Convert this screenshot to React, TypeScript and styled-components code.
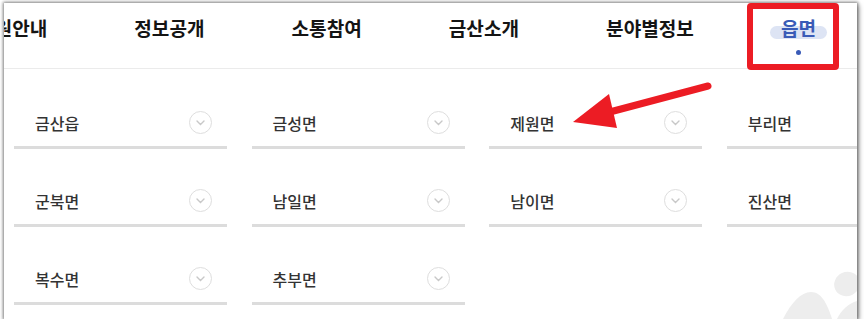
import React from 'react';
import styled, { createGlobalStyle } from 'styled-components';

const GlobalStyle = createGlobalStyle`
    html, body {
        margin: 0;
        padding: 0;
        background-color: #ffffff;
        overflow: hidden;
    }
    body {
        font-family: "Noto Sans CJK KR", "Noto Sans", sans-serif;
    }
`;

const Frame = styled.div`
    position: relative;
    width: 853px;
    height: 316px;
    margin: 3px 0 0 4px;
    background-color: #ffffff;
    box-shadow: 0 0 3px 1px rgba(0, 0, 0, 0.45), 2px 2px 5px rgba(0, 0, 0, 0.35);
`;

const Viewport = styled.div`
    position: relative;
    width: 100%;
    height: 100%;
    overflow: hidden;
`;

const Nav = styled.nav`
    display: flex;
    gap: 87px;
    height: 66px;
    margin-left: -27px;
    padding-top: 13px;
    box-sizing: border-box;
    border-bottom: 1px solid #ebebeb;
    white-space: nowrap;
`;

const NavItem = styled.a<{ $active?: boolean }>`
    position: relative;
    z-index: 0;
    font-size: 19.1px;
    font-weight: 700;
    line-height: 24px;
    color: ${(p) => (p.$active ? '#3a5bb7' : '#141414')};
    text-decoration: none;

    ${(p) =>
        p.$active &&
        `
        &::before {
            content: '';
            position: absolute;
            z-index: -1;
            left: -11px;
            right: -11px;
            top: 10px;
            height: 13px;
            border-radius: 7px;
            background-color: #dde4f4;
        }
        &::after {
            content: '';
            position: absolute;
            left: 50%;
            top: 34px;
            width: 5px;
            height: 5px;
            margin-left: -2px;
            border-radius: 50%;
            background-color: #3a5bb7;
        }
    `}
`;

const Grid = styled.div`
    display: grid;
    grid-template-columns: repeat(4, 213px);
    column-gap: 24.6px;
    row-gap: 28px;
    padding: 30px 0 0 10px;
`;

const Item = styled.div`
    display: flex;
    align-items: center;
    justify-content: space-between;
    height: 47px;
    padding: 0 15px 0 21px;
    border-bottom: 3px solid #dcdcdc;
    font-size: 16px;
    font-weight: 500;
    color: #333333;
`;

const Toggle = styled.span`
    display: flex;
    align-items: center;
    justify-content: center;
    width: 21px;
    height: 21px;
    border: 1px solid #dedede;
    border-radius: 50%;
    color: #c8c8c8;
`;

const Decoration = styled.svg`
    position: absolute;
    right: 0;
    bottom: 0;
`;

const Highlight = styled.div`
    position: absolute;
    left: 743px;
    top: 0;
    width: 92px;
    height: 67px;
    box-sizing: border-box;
    border: 6px solid #ec1c24;
    border-radius: 4px;
`;

const Arrow = styled.svg`
    position: absolute;
    left: -4px;
    top: -3px;
    pointer-events: none;
`;

const tabs = ['민원안내', '정보공개', '소통참여', '금산소개', '분야별정보', '읍면'];
const towns = ['금산읍', '금성면', '제원면', '부리면', '군북면', '남일면', '남이면', '진산면', '복수면', '추부면'];

function Chevron() {
    return (
        <svg width="9" height="6" viewBox="0 0 9 6">
            <path d="M1 1l3.5 3.5L8 1" fill="none" stroke="currentColor" strokeWidth="1.4" strokeLinecap="round" />
        </svg>
    );
}

export default function App() {
    return (
        <>
            <GlobalStyle />
            <Frame>
                <Viewport>
                    <Nav>
                        {tabs.map((t) => (
                            <NavItem key={t} $active={t === '읍면'}>
                                {t}
                            </NavItem>
                        ))}
                    </Nav>
                    <Grid>
                        {towns.map((t) => (
                            <Item key={t}>
                                <span>{t}</span>
                                <Toggle>
                                    <Chevron />
                                </Toggle>
                            </Item>
                        ))}
                    </Grid>
                    <Decoration width="80" height="50" viewBox="0 0 80 50">
                        <ellipse cx="70" cy="15" rx="13" ry="12" transform="rotate(-25 70 15)" fill="#ededed" />
                        <path d="M6 50 C 14 34, 24 23, 34 23 C 44 23, 50 34, 55 50 Z" fill="#ededed" />
                        <path d="M60 50 C 64 41, 72 34, 80 32 L 80 50 Z" fill="#ededed" />
                    </Decoration>
                </Viewport>
                <Highlight />
                <Arrow width="864" height="326" viewBox="0 0 864 326">
                    <line x1="708" y1="86" x2="606" y2="113" stroke="#ec1c24" strokeWidth="7" strokeLinecap="round" />
                    <polygon points="573,122 609,94 617,128" fill="#ec1c24" />
                </Arrow>
            </Frame>
        </>
    );
}
